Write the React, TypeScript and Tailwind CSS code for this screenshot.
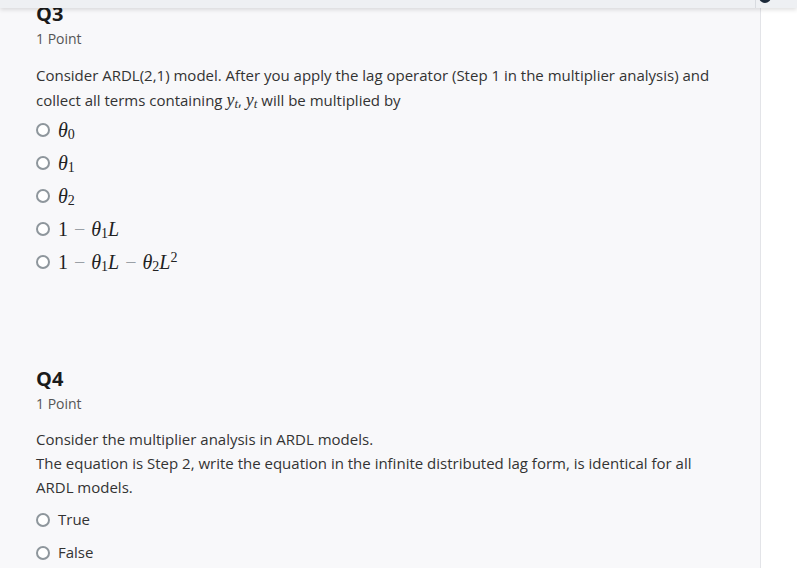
import React from 'react';

const serif = { fontFamily: '"Liberation Serif", "DejaVu Serif", serif' };

function Radio() {
  return <span className="inline-block h-[14px] w-[14px] shrink-0 rounded-full border-2 border-[#8e969c] bg-white" />;
}

function Theta({ sub }: { sub: string }) {
  return (
    <span className="whitespace-nowrap">
      <i>θ</i>
      <sub className="relative top-[2px] align-baseline text-[14px] leading-none">{sub}</sub>
    </span>
  );
}

function MathOption({ children }: { children: React.ReactNode }) {
  return (
    <div className="flex h-[33px] items-center gap-[8px]">
      <Radio />
      <span className="text-[20px] leading-none text-[#222]" style={serif}>
        {children}
      </span>
    </div>
  );
}

function Minus() {
  return <span className="mx-[6px] text-[#9aa0a6]">−</span>;
}

function TextOption({ label }: { label: string }) {
  return (
    <div className="flex h-[33px] items-center gap-[8px]">
      <Radio />
      <span className="text-[15px] text-[#333]">{label}</span>
    </div>
  );
}

function Header({ q }: { q: string }) {
  return (
    <div>
      <div className="text-[20px] font-bold leading-[24px] text-[#1b1b1b]">{q}</div>
      <div className="mt-[4px] text-[14px] leading-[18px] text-[#555]">1 Point</div>
    </div>
  );
}

function Yt() {
  return (
    <i className="text-[18px] leading-none" style={serif}>
      y<sub className="relative top-[2px] align-baseline text-[13px] leading-none">t</sub>
    </i>
  );
}

export default function App() {
  return (
    <div
      className="relative flex h-[568px] w-[797px] overflow-hidden bg-white"
      style={{ fontFamily: '"Open Sans", Lato, sans-serif' }}
    >
      <div className="absolute left-0 right-0 top-0 z-10 flex h-[8px] bg-[#eef0f3] shadow-[0_2px_4px_rgba(0,0,0,0.12)]">
        <div className="flex-1" />
        <div className="relative w-[42px] border-l border-[#d8dbe0]">
          <span className="absolute left-[3px] top-[-9px] h-[12px] w-[12px] rounded-full border-[3px] border-[#1c2a3a] bg-[#2b6cb0]" />
        </div>
      </div>
      <div className="w-[761px] shrink-0 border-r border-[#e3e4e8] bg-[#f8f8fa] pl-[36px] pr-[46px] pt-[2px]">
        <Header q="Q3" />
        <p className="mt-[15px] text-[15px] leading-[25px] text-[#333]">
          Consider ARDL(2,1) model. After you apply the lag operator (Step 1 in the multiplier analysis) and
          collect all terms containing <Yt />, <Yt /> will be multiplied by
        </p>
        <div className="mt-0">
          <MathOption><Theta sub="0" /></MathOption>
          <MathOption><Theta sub="1" /></MathOption>
          <MathOption><Theta sub="2" /></MathOption>
          <MathOption>
            1<Minus /><Theta sub="1" /><i>L</i>
          </MathOption>
          <MathOption>
            1<Minus /><Theta sub="1" /><i>L</i><Minus /><Theta sub="2" /><i>L</i>
            <sup className="relative top-[-7px] align-baseline text-[14px] leading-none">2</sup>
          </MathOption>
        </div>
        <div className="mt-[89px]">
          <Header q="Q4" />
        </div>
        <div className="mt-[14px] text-[15px] leading-[24px] text-[#333]">
          <p>Consider the multiplier analysis in ARDL models.</p>
          <p>
            The equation is Step 2, write the equation in the infinite distributed lag form, is identical for all
            ARDL models.
          </p>
        </div>
        <div className="mt-[4px]">
          <TextOption label="True" />
          <TextOption label="False" />
        </div>
      </div>
      <div className="flex-1 bg-white" />
    </div>
  );
}
